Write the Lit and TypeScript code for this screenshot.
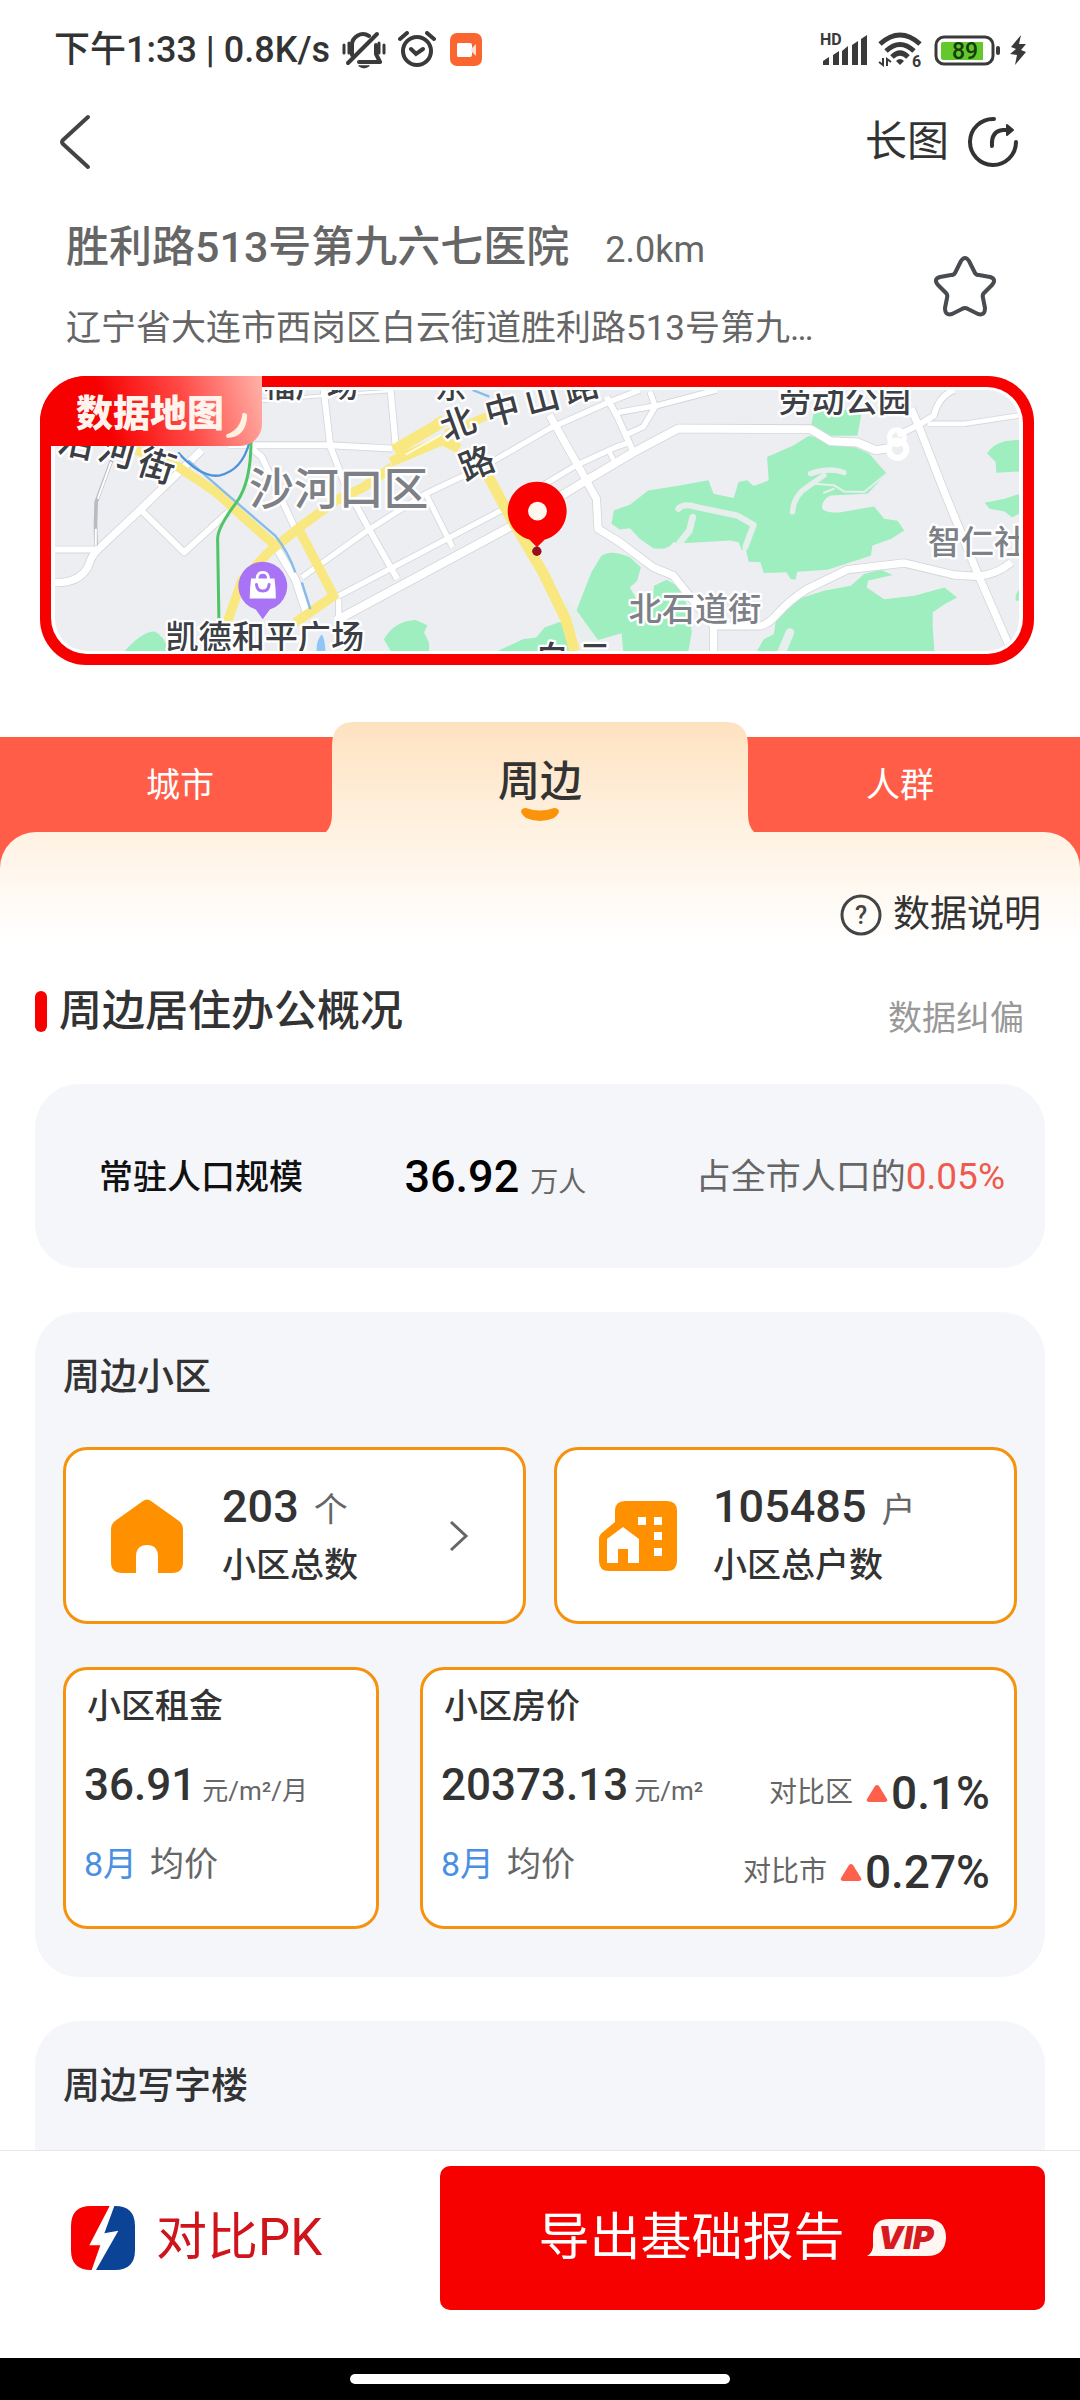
import { LitElement, html, svg, css } from "lit";
import { customElement, state } from "lit/decorators.js";
import { classMap } from "lit/directives/class-map.js";

interface Road {
  d: string;
  w: number;
}

const ROADS: Road[] = [
  { d: "M75 552H210", w: 18 },
  { d: "M75 650Q150 655 180 605Q190 570 210 552L340 430L520 255", w: 22 },
  { d: "M340 435L468 560L600 440", w: 18 },
  { d: "M600 240H900L1090 250", w: 18 },
  { d: "M885 75L905 245L950 360L1020 490L1105 640", w: 18 },
  { d: "M1085 75L1100 240", w: 18 },
  { d: "M690 108L885 92L1085 78", w: 8 },
  { d: "M820 635L1020 492L1190 385L1370 300L1560 190L1740 110L1830 75", w: 16 },
  { d: "M930 690L1410 438L1640 300L1760 245L1790 235", w: 16 },
  { d: "M1190 385L1270 545", w: 16 },
  { d: "M670 250L700 275L800 490", w: 18 },
  { d: "M740 540L800 640L835 745", w: 22 },
  { d: "M930 700V760", w: 16 },
  { d: "M1560 150L1650 310L1700 400L1705 490L1770 530L1870 605L1930 630L1970 680L2050 780V855", w: 22 },
  { d: "M2050 780H2190Q2215 775 2240 745Q2280 700 2330 670L2450 612L2620 592L2770 628L2840 632Q2900 625 2940 590", w: 22 },
  { d: "M1730 95L1765 160L1808 255", w: 18 },
  { d: "M1765 142L1880 122L2060 75", w: 16 },
  { d: "M1860 80L1876 125L1840 185L1790 208", w: 16 },
  { d: "M1740 262L1755 292", w: 14 },
  { d: "M920 765L1440 485L1670 345L1810 262L1945 190L2340 192L2400 228L2480 232L2535 255L2580 248", w: 24 },
  { d: "M2640 130L2662 180L2740 380L2840 625L2940 855", w: 22 },
  { d: "M2600 210L2662 180L2708 152Q2725 90 2770 75", w: 18 },
  { d: "M2690 176H2800L2970 150", w: 14 },
];

const GREENS = [
  "M290 855Q345 795 380 797Q410 810 420 855Z",
  "M1065 820Q1095 765 1160 762L1195 778L1185 800L1200 830V855H1085Z",
  "M1405 855L1480 820L1520 815L1545 785L1590 768L1630 790L1640 855Z",
  "M1640 735L1685 620L1715 570Q1745 550 1800 575L1833 605L1822 645L1800 665L1820 700L1870 692L1872 660L1910 642L1950 665L1980 740L1985 800L1975 855H1780L1775 802L1705 822L1655 780Z",
  "M1745 475L1752 435L1800 418L1855 375L1940 362L2035 345L2050 385L2110 398L2125 350L2150 345L2170 362L2215 345L2210 275L2290 240L2335 212L2400 225L2460 240L2515 265L2568 325L2510 385L2400 390Q2370 405 2375 430Q2390 445 2430 440L2530 423L2560 460L2600 466L2620 495L2580 520L2525 540L2520 570L2460 590L2390 612L2300 618L2295 642L2280 640L2268 620L2200 622L2190 590L2155 588L2145 545L2135 555L2125 530L2100 525L1970 532L1930 530Q1915 555 1870 548L1830 520L1800 488L1770 492Z",
  "M2350 140L2340 190L2400 212L2480 212L2495 130Z",
  "M2180 855L2200 820L2230 805L2240 740L2300 700L2380 675L2460 660L2500 625L2550 612L2585 628L2512 645L2508 665L2560 700L2650 690L2740 665L2778 695L2740 715L2705 740V780L2710 855Z",
  "M2975 222L2920 228Q2880 240 2868 265L2893 290L2895 322L2975 318Z",
  "M2975 382L2920 400L2860 412L2875 430L2920 438L2942 456L2975 438Z",
  "M2975 655Q2945 690 2955 705H2975Z",
];

const YELLOWS: Road[] = [
  { d: "M325 255L450 305L560 378L740 540", w: 28 },
  { d: "M595 775L640 645L720 560L820 480L930 400L1000 368L1090 305", w: 28 },
  { d: "M1095 255L1215 185L1245 165", w: 34 },
  { d: "M1085 290L1240 225L1290 250", w: 30 },
  { d: "M1250 205L1380 150", w: 24 },
  { d: "M815 500L915 690L800 770", w: 28 },
  { d: "M1370 320L1440 450L1540 620L1608 760L1635 855", w: 32 },
];

@customElement("location-map")
export class LocationMap extends LitElement {
  static styles = css`
    :host {
      display: block;
    }
    .frame {
      position: relative;
      box-sizing: border-box;
      height: 289px;
      padding: 11px;
      border-radius: 46px;
      overflow: hidden;
      background: #f60000;
    }
    .window {
      box-sizing: border-box;
      height: 100%;
      padding: 3px 4px;
      border-radius: 36px;
      background: #fff;
    }
    .canvas {
      display: block;
      width: 100%;
      height: 100%;
      border-radius: 32px;
      font-family: "Noto Sans CJK SC", sans-serif;
      font-weight: 500;
    }
    .label {
      paint-order: stroke;
      stroke: #fff;
      stroke-width: 14px;
      stroke-linejoin: round;
      fill: #3c3f45;
    }
    .soft {
      fill: #7d8187;
    }
    .badge {
      position: absolute;
      top: 0;
      left: 0;
      display: flex;
      align-items: center;
      box-sizing: border-box;
      width: 222px;
      height: 70px;
      padding-left: 36px;
      border-bottom-right-radius: 22px;
      background: linear-gradient(75deg, #f60000 30%, #ff4a46 65%, #ffb3aa 100%);
      color: #fff3ee;
      font: 900 37px/44px "Noto Sans CJK SC", sans-serif;
    }
    .swoosh {
      position: absolute;
      right: 13px;
      bottom: 6px;
      width: 24px;
      height: 28px;
    }
  `;

  render() {
    return html`
      <div class="frame">
        <div class="window">
          <svg class="canvas" viewBox="75 75 2895 780" preserveAspectRatio="xMidYMid slice" role="img" aria-label="数据地图">
            <rect x="0" y="0" width="3100" height="1000" fill="#edeef2" />
            ${GREENS.map((d) => svg`<path d=${d} fill="#9feec0" />`)}
            <g fill="none" stroke="#e6efec" stroke-linecap="round" stroke-linejoin="round">
              <path d="M1945 430Q1960 412 2000 425L2120 450L2170 478L2145 545" stroke-width="18" />
              <path d="M1988 455L1978 495L1950 530" stroke-width="20" />
              <path d="M2286 440Q2290 390 2330 365L2380 330M2340 325Q2400 305 2440 322" stroke-width="16" />
              <path d="M2350 355L2410 360L2440 378L2500 380L2568 325M2380 382L2410 370" stroke-width="6" />
              <path d="M2278 800L2255 855" stroke-width="26" />
              <path d="M1610 725L1700 850" stroke-width="40" />
            </g>
            <g fill="none" stroke-linejoin="round">
              ${ROADS.map((r) => svg`<path d=${r.d} stroke="#d5d6dc" stroke-width=${r.w + 5} />`)}
              ${ROADS.map((r) => svg`<path d=${r.d} stroke="#fff" stroke-width=${r.w} />`)}
              <circle cx="2600" cy="252" r="26" stroke="#fff" stroke-width="18" />
              <circle cx="2598" cy="216" r="22" stroke="#fff" stroke-width="16" />
              ${YELLOWS.map((r) => svg`<path d=${r.d} stroke="#f8e87f" stroke-width=${r.w} />`)}
              <path d="M1130 268L1235 210" stroke="#fffbe0" stroke-width="6" />
              <path d="M255 275L205 410L203 480L205 540" stroke="#b9bac2" stroke-width="11" />
              <path d="M250 290L210 400M204 490V540" stroke="#fff" stroke-width="6" />
              <path d="M480 285L600 390L740 510Q780 560 800 620M820 650L845 730M1330 75L1380 95" stroke="#86bcec" stroke-width="7" />
              <path d="M450 262Q520 340 575 330Q640 315 662 235" stroke="#4c93d9" stroke-width="7" />
              <path d="M668 225Q668 350 625 410Q568 485 568 520L572 768" stroke="#50c567" stroke-width="9" />
            </g>
            <path d="M880 805Q860 825 865 860H890Q890 825 880 805Z" fill="#8fc6f7" />
            <g font-size="94">
              <text class="label" x="706" y="96">福广场</text>
              <text class="label" x="1218" y="98">东</text>
            </g>
            <g font-size="110">
              <text class="label" transform="translate(86 258) rotate(12)">沿</text>
              <text class="label" transform="translate(206 280) rotate(16)">河</text>
              <text class="label" transform="translate(322 322) rotate(18)">街</text>
            </g>
            <g font-size="104">
              <text class="label" transform="translate(1250 228) rotate(-20)">北</text>
              <text class="label" transform="translate(1308 348) rotate(-22)">路</text>
              <text class="label" transform="translate(1378 184) rotate(-15)">中</text>
              <text class="label" transform="translate(1496 150) rotate(-15)">山</text>
              <text class="label" transform="translate(1614 116) rotate(-15)">路</text>
            </g>
            <g font-size="99">
              <text class="label" x="412" y="850">凯德和平广场</text>
              <text class="label" x="2244" y="140">劳动公园</text>
              <text class="label soft" x="2690" y="566">智仁社</text>
              <text class="label soft" x="1797" y="766">北石道街</text>
              <text class="label" x="1518" y="912">白</text>
              <text class="label" x="1646" y="912">云</text>
            </g>
            <text class="label soft" x="662" y="420" font-size="134">沙河口区</text>
            <path d="M703 760L682 731A73 73 0 1 1 724 731Z" fill="#a873f5" />
            <path d="M668 638H738Q742 668 742 698H664Q664 668 668 638Z" fill="#fff" />
            <path d="M686 640Q686 620 703 620Q720 620 720 640" fill="none" stroke="#fff" stroke-width="8" />
            <path d="M684 656Q686 676 703 676Q720 676 722 656" fill="none" stroke="#a873f5" stroke-width="9" stroke-linecap="round" />
            <path d="M1522 545L1500 522A88 88 0 1 1 1546 522Z" fill="#fb0000" />
            <circle cx="1524" cy="437" r="28" fill="#fff8f0" />
            <circle cx="1522" cy="557" r="14" fill="#96101c" />
          </svg>
        </div>
        <div class="badge">
          数据地图
          <svg class="swoosh" viewBox="0 0 26 30" aria-hidden="true">
            <path d="M19 1Q24 0 24 4Q23 27 3 28Q0 27 2 24Q17 19 19 1Z" fill="#fff0e0" />
          </svg>
        </div>
      </div>
    `;
  }
}

const TABS = ["城市", "周边", "人群"];

@customElement("app-root")
export class AppRoot extends LitElement {
  @state() private active = 1;
  @state() private starred = false;

  static styles = css`
    :host {
      display: flex;
      flex-direction: column;
      height: 100vh;
      background: #fff;
      color: #333;
      font-family: Roboto, "Noto Sans CJK SC", sans-serif;
      font-size: 34px;
      line-height: 48px;
    }
    button {
      padding: 0;
      border: 0;
      background: none;
      color: inherit;
      font: inherit;
      cursor: pointer;
    }
    svg {
      display: block;
      flex: none;
    }
    h1,
    h2,
    h3,
    p {
      margin: 0;
      font-weight: 500;
    }
    .status {
      display: flex;
      align-items: center;
      flex: none;
      height: 100px;
      padding: 0 54px;
      font-size: 36px;
      font-weight: 500;
    }
    .status-left,
    .status-right {
      display: flex;
      align-items: center;
      gap: 12px;
    }
    .status-right {
      gap: 10px;
      margin-left: auto;
    }
    .nav {
      display: flex;
      align-items: center;
      justify-content: space-between;
      flex: none;
      height: 84px;
      padding: 0 60px 0 58px;
    }
    .share {
      display: flex;
      align-items: center;
      gap: 17px;
      font-size: 42px;
    }
    .scroll {
      flex: 1;
      min-height: 0;
      overflow-y: auto;
      scrollbar-width: none;
    }
    .place {
      display: flex;
      align-items: center;
      justify-content: space-between;
      padding: 34px 83px 23px 66px;
      color: #666;
    }
    .place-text {
      display: flex;
      flex-direction: column;
      gap: 29px;
      min-width: 0;
    }
    .place-head {
      display: flex;
      align-items: baseline;
      gap: 36px;
      height: 58px;
      line-height: 58px;
    }
    .place-name {
      font-size: 43px;
    }
    .distance {
      font-size: 36px;
    }
    .address {
      width: 764px;
      max-width: 100%;
      overflow: hidden;
      font-size: 35px;
      font-weight: 400;
      text-overflow: ellipsis;
      white-space: nowrap;
    }
    .map {
      margin: 0 46px 0 40px;
    }
    .tabs {
      display: grid;
      grid-template-columns: repeat(3, 1fr);
      height: 95px;
      margin-top: 72px;
      background: #ff5d48;
    }
    .tab {
      position: relative;
      color: #fff;
    }
    .tab.active {
      z-index: 1;
      padding-bottom: 6px;
      color: #333;
      font-size: 42px;
      font-weight: 500;
    }
    .tab-shape {
      position: absolute;
      inset: -15px -34px 0;
      z-index: -1;
      width: calc(100% + 68px);
      height: 110px;
    }
    .smile {
      position: absolute;
      bottom: 11px;
      left: calc(50% - 19px);
    }
    .panel-back {
      background: linear-gradient(#ff5d48, #ff5d48) 0 0 / 100% 40px no-repeat;
    }
    .panel {
      padding: 58px 35px 0;
      border-radius: 36px 36px 0 0;
      background: linear-gradient(#fff2e2, #fff 110px);
    }
    .explain {
      display: flex;
      align-items: center;
      gap: 11px;
      margin: 0 4px 0 auto;
      font-size: 37px;
      line-height: 50px;
    }
    .section {
      display: flex;
      align-items: center;
      justify-content: space-between;
      height: 50px;
      margin: 46px 21px 48px 0;
      line-height: 50px;
    }
    .section-title {
      display: flex;
      align-items: center;
      gap: 12px;
      font-size: 43px;
    }
    .mark {
      width: 12px;
      height: 41px;
      border-radius: 6px;
      background: #f60000;
    }
    .correct {
      padding-top: 14px;
      color: #999;
    }
    .cards {
      display: flex;
      flex-direction: column;
      gap: 44px;
    }
    .card {
      padding: 41px 28px 48px;
      border-radius: 44px;
      background: #f5f6fa;
    }
    .card.population {
      display: flex;
      align-items: center;
      justify-content: space-between;
      box-sizing: border-box;
      min-height: 184px;
      padding: 2px 40px 0 64px;
    }
    .population-label {
      color: #111;
      font-weight: 500;
    }
    .population .number {
      color: #000;
    }
    .population .figure {
      margin-right: 8px;
    }
    .share-text {
      color: #666;
      font-size: 35px;
    }
    .percent {
      color: #ee5a4c;
      font-size: 37px;
    }
    .muted {
      color: #666;
    }
    .figure {
      display: flex;
      align-items: baseline;
      height: 58px;
      line-height: 58px;
    }
    .number {
      font-size: 45px;
      font-weight: 500;
    }
    .unit {
      margin-left: 11px;
      color: #666;
      font-size: 28px;
      font-weight: 400;
    }
    .total .unit {
      margin-left: 15px;
      font-size: 34px;
    }
    .price .unit {
      margin-left: 6px;
      font-size: 26px;
    }
    .card-title {
      font-size: 37px;
      line-height: 50px;
    }
    .totals {
      display: grid;
      grid-template-columns: 1fr 1fr;
      gap: 28px;
      margin-top: 44px;
    }
    .prices {
      display: grid;
      grid-template-columns: 316fr 597fr;
      gap: 41px;
      margin-top: 43px;
    }
    .box {
      display: flex;
      box-sizing: border-box;
      border: 3px solid #f5930f;
      border-radius: 24px;
      background: #fff;
      text-align: left;
    }
    .total {
      align-items: center;
      gap: 36px;
      min-height: 177px;
      padding: 0 54px 0 42px;
      line-height: 58px;
    }
    .total-text {
      display: flex;
      flex-direction: column;
    }
    .total-label,
    .price-title {
      font-size: 34px;
      font-weight: 500;
    }
    .price-title {
      padding-left: 3px;
    }
    .chevron {
      margin-left: auto;
    }
    .price {
      justify-content: space-between;
      min-height: 262px;
      padding: 12px 24px 28px 18px;
    }
    .price .number {
      font-size: 44px;
    }
    .price-main {
      display: flex;
      flex-direction: column;
      gap: 26px;
      white-space: nowrap;
    }
    .month {
      margin-right: 13px;
      color: #4a90e2;
    }
    .compare {
      display: flex;
      flex-direction: column;
      align-items: flex-end;
      align-self: flex-end;
      gap: 27px;
      line-height: 52px;
    }
    .compare-row {
      display: flex;
      align-items: center;
    }
    .compare-label {
      margin-right: 13px;
      color: #666;
      font-size: 28px;
    }
    .compare .number {
      margin-left: 3px;
      font-size: 46px;
    }
    .offices {
      min-height: 300px;
    }
    .actions {
      display: flex;
      align-items: center;
      justify-content: space-between;
      flex: none;
      padding: 15px 35px 48px 71px;
      border-top: 1px solid #e6e6e8;
      font-size: 51px;
      line-height: 72px;
    }
    .pk {
      display: flex;
      align-items: center;
      gap: 21px;
      color: #d0141c;
    }
    .export {
      display: flex;
      align-items: center;
      justify-content: center;
      flex: 0 1 605px;
      gap: 22px;
      height: 144px;
      border-radius: 10px;
      background: #f60000;
      color: #fff;
    }
    .system {
      display: flex;
      align-items: center;
      justify-content: center;
      flex: none;
      height: 42px;
      background: #000;
    }
    .home {
      width: 380px;
      height: 10px;
      border-radius: 5px;
      background: #fff;
    }
  `;

  private renderStatus() {
    return html`
      <div class="status">
        <div class="status-left">
          <span>下午1:33 | 0.8K/s</span>
          <svg width="44" height="38" viewBox="0 0 44 38" fill="none" stroke="#3a3a3a" stroke-width="4" stroke-linecap="round">
            <path d="M10 24V15A11 11 0 0 1 27 5M34 14V23L38 31H17" stroke-linejoin="round" />
            <path d="M35 3L6 32" />
            <path d="M2 14V22M7 12V22M37 12V22M42 14V22" stroke-width="3" />
            <path d="M17 35Q22 39 27 35Z" fill="#3a3a3a" stroke-width="1" />
          </svg>
          <svg width="38" height="38" viewBox="0 0 38 38" fill="none" stroke="#3a3a3a" stroke-width="4" stroke-linecap="round">
            <circle cx="19" cy="20" r="14" />
            <path d="M13 18L18 23L25 18M2 8L9 2M36 8L29 2" />
          </svg>
          <svg width="36" height="34" viewBox="-2 0 36 34">
            <rect width="32" height="33" rx="7" fill="#fa6530" />
            <path d="M8 10H20Q22 10 22 12V22Q22 24 20 24H8Q7 24 7 22V12Q7 10 8 10Z" fill="#fff" />
            <path d="M21 16L26 11V23L21 18Z" fill="#ffe0d2" />
          </svg>
        </div>
        <div class="status-right">
          <svg width="48" height="34" viewBox="0 0 48 34" fill="#3a3a3a">
            <text x="0" y="12" font-size="16" font-weight="700">HD</text>
            <path d="M3 28L9 24V32H3ZM13 22L19 18V32H13ZM22 18L28 13V32H22ZM32 12L38 8V32H32ZM41 6L47 2V32H41Z" />
          </svg>
          <svg width="44" height="36" viewBox="0 0 44 36" fill="none" stroke="#3a3a3a" stroke-width="5">
            <path d="M2 12Q22 -6 42 12M8 19Q22 6 36 19M14 25Q22 17 30 25" />
            <path d="M18 29Q22 25 26 29L22 33Z" fill="#3a3a3a" stroke="none" />
            <path d="M1 30L5 33V26M9 34V27L13 30" stroke-width="2" />
            <text x="34" y="35" font-size="16" font-weight="700" fill="#3a3a3a" stroke="none">6</text>
          </svg>
          <svg width="68" height="32" viewBox="0 0 68 32">
            <rect x="4" y="3" width="57" height="27" rx="8" fill="none" stroke="#3a3a3a" stroke-width="3" />
            <path d="M11 8H51V26H11Q9 26 9 24V10Q9 8 11 8Z" fill="#62c82c" />
            <rect x="64" y="12" width="4" height="9" rx="2" fill="#3a3a3a" />
            <text x="20" y="25" font-size="23" font-weight="500" fill="#173b0c">89</text>
          </svg>
          <svg width="16" height="30" viewBox="0 0 16 30" fill="#3a3a3a">
            <path d="M11 0L1 12L6 14L0 19L7 20L5 30L16 17L11 15L16 9L9 9Z" />
          </svg>
        </div>
      </div>
    `;
  }

  private renderTotals() {
    return html`
      <div class="totals">
        <button class="box total">
          <svg width="78" height="76" viewBox="0 0 78 76">
            <path d="M35 3Q39 0 43 3L71 23Q75 26 75 31V64Q75 75 64 75H50V59Q50 47 39 47Q28 47 28 59V75H14Q3 75 3 64V31Q3 26 7 23Z" fill="#ff9100" />
          </svg>
          <span class="total-text">
            <span class="figure"><span class="number">203</span><span class="unit">个</span></span>
            <span class="total-label">小区总数</span>
          </span>
          <svg class="chevron" width="20" height="32" viewBox="0 0 20 32" fill="none" stroke="#666" stroke-width="3">
            <path d="M2 2L17 16L2 30" />
          </svg>
        </button>
        <div class="box total">
          <svg width="78" height="70" viewBox="0 0 78 70">
            <path d="M26 0H68Q78 0 78 10V60Q78 70 68 70H10Q0 70 0 60V38Q0 34 4 31L16 21V10Q16 0 26 0Z" fill="#ff9100" />
            <path d="M24 26L40 38V62H29V48H19V62H8V38Z" fill="#fff" />
            <path d="M39 16H47V24H39ZM55 16H63V24H55ZM55 31H63V39H55ZM55 47H63V55H55Z" fill="#fff" />
          </svg>
          <span class="total-text">
            <span class="figure"><span class="number">105485</span><span class="unit">户</span></span>
            <span class="total-label">小区总户数</span>
          </span>
        </div>
      </div>
    `;
  }

  private renderCompare(label: string, value: string) {
    return html`
      <div class="compare-row">
        <span class="compare-label">${label}</span>
        <svg width="22" height="17" viewBox="0 0 22 17">
          <path d="M9 1Q11 -1 13 1L21 14Q22 17 19 17H3Q0 17 1 14Z" fill="#ff604c" />
        </svg>
        <span class="number">${value}</span>
      </div>
    `;
  }

  private renderPrices() {
    return html`
      <div class="prices">
        <div class="box price">
          <div class="price-main">
            <h3 class="price-title">小区租金</h3>
            <div class="figure"><span class="number">36.91</span><span class="unit">元/m²/月</span></div>
            <div class="muted"><span class="month">8月</span>均价</div>
          </div>
        </div>
        <div class="box price">
          <div class="price-main">
            <h3 class="price-title">小区房价</h3>
            <div class="figure"><span class="number">20373.13</span><span class="unit">元/m²</span></div>
            <div class="muted"><span class="month">8月</span>均价</div>
          </div>
          <div class="compare">
            ${this.renderCompare("对比区", "0.1%")} ${this.renderCompare("对比市", "0.27%")}
          </div>
        </div>
      </div>
    `;
  }

  render() {
    return html`
      ${this.renderStatus()}
      <header class="nav">
        <button aria-label="返回">
          <svg width="34" height="56" viewBox="0 0 34 56" fill="none" stroke="#444" stroke-width="4" stroke-linecap="round" stroke-linejoin="round">
            <path d="M30 3L5 26Q3 28 5 30L30 53" />
          </svg>
        </button>
        <button class="share">
          长图
          <svg width="54" height="52" viewBox="0 0 54 52" fill="none" stroke="#333" stroke-width="4" stroke-linecap="round" stroke-linejoin="round">
            <path d="M28 3A23 23 0 1 0 50 26" />
            <path d="M26 30Q25 15 37 14H43" />
            <path d="M41 9L47 14L41 19Z" fill="#333" stroke-width="2" />
          </svg>
        </button>
      </header>
      <main class="scroll">
        <section class="place">
          <div class="place-text">
            <div class="place-head">
              <h1 class="place-name">胜利路513号第九六七医院</h1>
              <span class="distance">2.0km</span>
            </div>
            <p class="address">辽宁省大连市西岗区白云街道胜利路513号第九六七医院</p>
          </div>
          <button aria-label="收藏" aria-pressed=${this.starred} @click=${() => (this.starred = !this.starred)}>
            <svg width="64" height="64" viewBox="0 0 64 64" fill=${this.starred ? "#ff9100" : "none"} stroke="#484b50" stroke-width="4" stroke-linejoin="round">
              <path d="M28 7Q32 1 36 7L42 19Q43 21 46 21L57 23Q64 25 59 31L51 39Q49 41 50 44L52 54Q52 62 45 60L35 55Q32 53 29 55L19 60Q12 62 12 54L14 44Q15 41 13 39L5 31Q0 25 7 23L18 21Q21 21 22 19Z" />
            </svg>
          </button>
        </section>
        <location-map class="map"></location-map>
        <nav class="tabs">
          ${TABS.map(
            (name, i) => html`
              <button class=${classMap({ tab: true, active: i === this.active })} @click=${() => (this.active = i)}>
                ${i === this.active
                  ? html`
                      <svg class="tab-shape" viewBox="0 0 428 110" preserveAspectRatio="none" aria-hidden="true">
                        <defs>
                          <linearGradient id="cream" x1="0" y1="0" x2="0" y2="1">
                            <stop offset="0" stop-color="#fee2c0" />
                            <stop offset="1" stop-color="#fff2e2" />
                          </linearGradient>
                        </defs>
                        <path d="M0 110Q6 104 6 92V24Q6 0 28 0H400Q422 0 422 24V92Q422 104 428 110Z" fill="url(#cream)" />
                      </svg>
                      <svg class="smile" width="38" height="14" viewBox="0 0 38 14" aria-hidden="true">
                        <path d="M5 1Q19 6 33 1Q38 1 38 5Q37 8 33 11Q19 17 5 11Q1 8 0 5Q0 1 5 1Z" fill="#fb940a" />
                      </svg>
                    `
                  : ""}
                ${name}
              </button>
            `,
          )}
        </nav>
        <div class="panel-back">
          <div class="panel">
            <button class="explain">
              <svg width="42" height="42" viewBox="0 0 42 42">
                <circle cx="21" cy="21" r="19" fill="none" stroke="#444" stroke-width="3" />
                <text x="21" y="30" text-anchor="middle" font-size="25" font-weight="500" fill="#444">?</text>
              </svg>
              数据说明
            </button>
            <div class="section">
              <h2 class="section-title"><span class="mark"></span>周边居住办公概况</h2>
              <button class="correct">数据纠偏</button>
            </div>
            <div class="cards">
              <section class="card population">
                <span class="population-label">常驻人口规模</span>
                <span class="figure"><span class="number">36.92</span><span class="unit">万人</span></span>
                <span class="share-text">占全市人口的<span class="percent">0.05%</span></span>
              </section>
              <section class="card">
                <h2 class="card-title">周边小区</h2>
                ${this.renderTotals()} ${this.renderPrices()}
              </section>
              <section class="card offices">
                <h2 class="card-title">周边写字楼</h2>
              </section>
            </div>
          </div>
        </div>
      </main>
      <footer class="actions">
        <button class="pk">
          <svg width="64" height="64" viewBox="0 0 192 192">
            <path d="M60 0H116L55 118H88L62 192H60Q0 192 0 132V60Q0 0 60 0Z" fill="#f80000" />
            <path d="M130 0H132Q192 0 192 60V132Q192 192 132 192H75L142 74L100 82Z" fill="#0b4397" />
          </svg>
          对比PK
        </button>
        <button class="export">
          导出基础报告
          <svg width="80" height="38" viewBox="0 0 80 38">
            <path d="M22 0H60Q79 0 79 19Q78 37 60 37H0Q7 33 6 24V15Q7 0 22 0Z" fill="#fff6f2" />
            <text x="11" y="30" font-family="Inter, sans-serif" font-size="32" font-weight="900" font-style="italic" fill="#d61a20">VIP</text>
          </svg>
        </button>
      </footer>
      <div class="system"><span class="home"></span></div>
    `;
  }
}
